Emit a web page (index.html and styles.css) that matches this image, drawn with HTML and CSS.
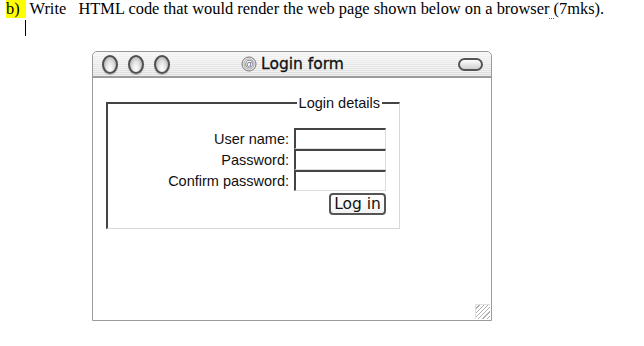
FILE: index.html
```html
<!DOCTYPE html>
<html>
<head>
  <meta charset="utf-8">
  <title>Login form question</title>
  <link rel="stylesheet" href="styles.css">
</head>
<body>
  <p class="question"><span class="mark">b)&nbsp;</span> Write &nbsp; HTML code that would render the web page shown below on a browser<span class="squiggle"> </span>(7mks).</p>
  <div class="caret"></div>

  <div class="window">
    <div class="titlebar">
      <div class="lights">
        <span class="light"></span>
        <span class="light"></span>
        <span class="light"></span>
      </div>
      <div class="title">
        <svg class="at" width="16" height="16" viewBox="0 0 16 16">
          <circle cx="8" cy="8" r="7" fill="#e8e8e8" stroke="#777" stroke-width="1"/>
          <circle cx="8" cy="8" r="5" fill="#fff" stroke="#999" stroke-width="0.8"/>
          <text x="8" y="11" font-size="9" font-family="Liberation Sans, sans-serif" text-anchor="middle" fill="#555">@</text>
        </svg>
        <span>Login form</span>
      </div>
      <div class="right"><span class="pill"></span></div>
    </div>

    <div class="content">
      <fieldset class="details">
        <legend>Login details</legend>
        <div class="rows">
          <label for="user">User name:</label>
          <input id="user" type="text">
          <label for="pass">Password:</label>
          <input id="pass" type="password">
          <label for="confirm">Confirm password:</label>
          <input id="confirm" type="password">
          <button class="login" type="button">Log in</button>
        </div>
      </fieldset>
    </div>

    <div class="grip"></div>
  </div>
</body>
</html>
```

FILE: styles.css
```css
html, body { margin: 0; padding: 0; background: #fff; }
body {
  font-family: "Liberation Serif", "Times New Roman", serif;
  color: #000;
}

.question {
  margin: 0;
  padding: 0 0 0 6px;
  font-size: 16.4px;
  line-height: 18px;
}
.mark {
  background: #ffff00;
  padding-right: 2px;
}
.squiggle {
  border-bottom: 1px dotted #3a5fd0;
}

.caret {
  width: 1px;
  height: 16px;
  margin: 2px 0 0 25px;
  background: #000;
}

/* the mac style window */
.window {
  position: relative;
  width: 398px;
  height: 268px;
  margin: 15px 0 0 92px;
  border: 1px solid #9a9a9a;
  border-radius: 5px 5px 0 0;
  background: #fff;
}
.titlebar {
  display: grid;
  grid-template-columns: 1fr auto 1fr;
  align-items: center;
  height: 24px;
  padding: 0 8px 0 9px;
  border-bottom: 2px solid #9c9c9c;
  border-radius: 5px 5px 0 0;
  background:
    repeating-linear-gradient(0deg, rgba(255,255,255,0.55) 0 1px, rgba(0,0,0,0) 1px 2px),
    linear-gradient(#f4f4f4, #dcdcdc);
}
.lights { display: flex; gap: 10px; }
.light {
  width: 12px;
  height: 15px;
  border: 2px solid #505050;
  border-radius: 50%;
  background: radial-gradient(ellipse at 50% 75%, #fff 0%, #e0e0e0 45%, #9a9a9a 100%);
  box-shadow: 0 1px 1px rgba(0,0,0,0.25);
}
.title {
  display: flex;
  align-items: center;
  gap: 4px;
  font-family: "DejaVu Sans", "Liberation Sans", sans-serif;
  font-size: 15.5px;
  color: #111;
  -webkit-text-stroke: 0.3px #111;
}
.right { display: flex; justify-content: flex-end; }
.pill {
  width: 21px;
  height: 9px;
  border: 2px solid #555;
  border-radius: 7px;
  background: linear-gradient(#fff, #d0d0d0);
}

.content {
  padding: 17px 0 0 13px;
}
.details {
  box-sizing: border-box;
  width: 294px;
  min-width: 0;
  margin: 0;
  padding: 17px 13px 13px 0;
  border-top: 2px solid #444;
  border-left: 2px solid #444;
  border-right: 1px solid #d8d8d8;
  border-bottom: 1px solid #d8d8d8;
  font-family: "Liberation Sans", Arial, sans-serif;
}
.details legend {
  margin-left: auto;
  margin-right: 4px;
  padding: 0 2px;
  font-size: 14.5px;
  color: #111;
}
.rows {
  display: grid;
  grid-template-columns: auto 92px;
  justify-content: end;
  column-gap: 5px;
  align-items: center;
  font-size: 14.5px;
}
.rows label {
  text-align: right;
  color: #111;
}
.rows input {
  box-sizing: border-box;
  width: 92px;
  height: 21px;
  margin: 0;
  border-top: 2px solid #444;
  border-left: 2px solid #444;
  border-right: 1px solid #ddd;
  border-bottom: 1px solid #ddd;
  outline: none;
}
.login {
  grid-column: 2;
  justify-self: end;
  width: 57px;
  height: 22px;
  margin-top: 2px;
  padding: 0;
  border: 2px solid #555;
  border-radius: 4px;
  background: linear-gradient(#fff, #f2f2f2);
  font-family: "DejaVu Sans", "Liberation Sans", sans-serif;
  font-size: 15.5px;
  color: #111;
}

.grip {
  position: absolute;
  right: 1px;
  bottom: 1px;
  width: 14px;
  height: 14px;
  background: repeating-linear-gradient(135deg, #fff 0 2px, #b0b0b0 2px 3px);
  border-left: 1px solid #e0e0e0;
  border-top: 1px solid #e0e0e0;
}
```
